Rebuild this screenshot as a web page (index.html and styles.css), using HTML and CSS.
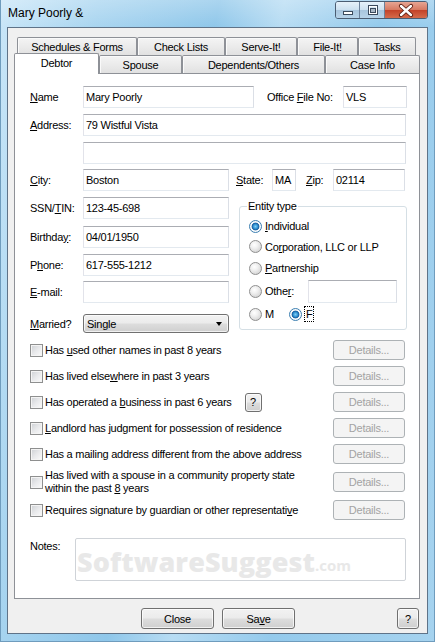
FILE: index.html
```html
<!DOCTYPE html>
<html>
<head>
<meta charset="utf-8">
<title>Mary Poorly &amp;</title>
<link rel="stylesheet" href="styles.css">
</head>
<body>
<div class="window">
  <div class="titlebar">
    <span class="title">Mary Poorly &amp;</span>
    <div class="caption-btns">
      <span class="cbtn cbtn-min"><svg width="24" height="17" viewBox="0 0 24 17"><rect x="7.5" y="9.5" width="9" height="3" fill="#fff" stroke="#3b4a5c"/></svg></span>
      <span class="cbtn cbtn-max"><svg width="25" height="17" viewBox="0 0 25 17"><rect x="8.5" y="3.5" width="9" height="9" fill="none" stroke="#3b4a5c"/><rect x="9.5" y="4.5" width="7" height="7" fill="none" stroke="#fff"/><rect x="10.5" y="6.5" width="5" height="4" fill="#aab8c6" stroke="#3b4a5c"/></svg></span>
      <span class="cbtn cbtn-close"><svg width="42" height="17" viewBox="0 0 42 17"><path d="M16 4 L26 13 M26 4 L16 13" stroke="#5b1c10" stroke-width="4.2" stroke-linecap="round"/><path d="M16 4 L26 13 M26 4 L16 13" stroke="#fff" stroke-width="2.4" stroke-linecap="round"/></svg></span>
    </div>
  </div>
  <div class="client">
    <div class="tabs">
      <div class="tabrow back">
        <span class="tab w-sched">Schedules &amp; Forms</span>
        <span class="tab w-check">Check Lists</span>
        <span class="tab w-serve">Serve-It!</span>
        <span class="tab w-file">File-It!</span>
        <span class="tab w-tasks">Tasks</span>
      </div>
      <div class="tabrow front">
        <span class="tab sel w-debtor">Debtor</span>
        <span class="tab w-spouse">Spouse</span>
        <span class="tab w-dep">Dependents/Others</span>
        <span class="tab w-case">Case Info</span>
      </div>
    </div>
    <div class="panel">
      <div class="row">
        <span class="lbl"><u>N</u>ame</span>
        <span class="inp w-name">Mary Poorly</span>
        <span class="lbl-office">Office <u>F</u>ile No:</span>
        <span class="inp w-office">VLS</span>
      </div>
      <div class="row mt6">
        <span class="lbl"><u>A</u>ddress:</span>
        <span class="inp w-addr">79 Wistful Vista</span>
      </div>
      <div class="row mt6">
        <span class="lbl"></span>
        <span class="inp w-addr"></span>
      </div>
      <div class="row mt5">
        <span class="lbl"><u>C</u>ity:</span>
        <span class="inp w-city">Boston</span>
        <span class="lbl-state"><u>S</u>tate:</span>
        <span class="inp w-state">MA</span>
        <span class="lbl-zip"><u>Z</u>ip:</span>
        <span class="inp w-zip">02114</span>
      </div>
      <div class="lower">
        <div class="leftcol">
          <div class="row">
            <span class="lbl">SSN/<u>T</u>IN:</span>
            <span class="inp w-city">123-45-698</span>
          </div>
          <div class="row mt7">
            <span class="lbl">Birthda<u>y</u>:</span>
            <span class="inp w-city">04/01/1950</span>
          </div>
          <div class="row mt6">
            <span class="lbl">P<u>h</u>one:</span>
            <span class="inp w-city">617-555-1212</span>
          </div>
          <div class="row mt5">
            <span class="lbl"><u>E</u>-mail:</span>
            <span class="inp w-city"></span>
          </div>
          <div class="row row-select">
            <span class="lbl"><u>M</u>arried?</span>
            <span class="select">Single<span class="arrow"></span></span>
          </div>
        </div>
        <fieldset class="entity">
          <legend>Entity type</legend>
          <div class="rrow h20"><span class="rd on"></span><span class="rtext"><u>I</u>ndividual</span></div>
          <div class="rrow h21"><span class="rd"></span><span class="rtext">Co<u>r</u>poration, LLC or LLP</span></div>
          <div class="rrow h22"><span class="rd"></span><span class="rtext"><u>P</u>artnership</span></div>
          <div class="rrow h24"><span class="rd"></span><span class="rtext">Othe<u>r</u>:</span><span class="inp w-other"></span></div>
          <div class="rrow h22"><span class="rd"></span><span class="rtext w-m">M</span><span class="rd on"></span><span class="rtext focus">F</span></div>
        </fieldset>
      </div>
      <div class="checks">
        <div class="crow"><span class="cb"></span><span class="ctext">Has <u>u</u>sed other names in past 8 years</span><span class="btn details">Details...</span></div>
        <div class="crow"><span class="cb"></span><span class="ctext">Has lived else<u>w</u>here in past 3 years</span><span class="btn details">Details...</span></div>
        <div class="crow"><span class="cb"></span><span class="ctext">Has operated a <u>b</u>usiness in past 6 years</span><span class="btn qbtn">?</span><span class="btn details">Details...</span></div>
        <div class="crow"><span class="cb"></span><span class="ctext"><u>L</u>andlord has judgment for possession of residence</span><span class="btn details">Details...</span></div>
        <div class="crow"><span class="cb"></span><span class="ctext">Has a mailin<u>g</u> address different from the above address</span><span class="btn details">Details...</span></div>
        <div class="crow tall"><span class="cb"></span><span class="ctext two">Has lived with a spouse in a community property state<br>within the past <u>8</u> years</span><span class="btn details">Details...</span></div>
        <div class="crow"><span class="cb"></span><span class="ctext">Requires signature by guardian or other representati<u>v</u>e</span><span class="btn details">Details...</span></div>
      </div>
      <div class="notes">
        <span class="lbl-notes">Notes:</span>
        <div class="notes-box"><span class="wm">SoftwareSuggest</span><span class="wm-com">.com</span></div>
      </div>
    </div>
    <div class="footer">
      <span class="btn push w-close">Close</span>
      <span class="btn push w-save">Sa<u>v</u>e</span>
      <span class="btn push w-help">?</span>
    </div>
  </div>
</div>
</body>
</html>
```
FILE: styles.css
```css
* { box-sizing: border-box; }
html, body { margin: 0; padding: 0; }
body {
  width: 435px;
  height: 642px;
  overflow: hidden;
  font-family: "Liberation Sans", Arial, sans-serif;
  font-size: 11px;
  letter-spacing: -0.25px;
  color: #000;
}
u { text-decoration: underline; text-underline-offset: 1px; }

.window {
  width: 435px;
  height: 642px;
  padding: 0 6px 7px 6px;
  display: flex;
  flex-direction: column;
  background:
    linear-gradient(180deg, rgba(255,255,255,0.25) 0px, rgba(255,255,255,0) 27px),
    linear-gradient(100deg, #c9e6f8 0%, #a9d5f0 18%, #8fc7ea 40%, #b7dcf3 52%, #94caec 70%, #a6d3ef 100%);
  border-left: 1px solid #6f9cbd;
  border-right: 1px solid #6f9cbd;
  border-bottom: 1px solid #6f9cbd;
}

/* Title bar */
.titlebar {
  height: 27px;
  display: flex;
  align-items: flex-start;
}
.title {
  font-size: 12px;
  letter-spacing: 0;
  line-height: 14px;
  margin: 6px 0 0 1px;
}
.caption-btns {
  margin: 1px 0 0 auto;
  display: flex;
  height: 18px;
  border: 1px solid #4b5d72;
  border-radius: 3px;
  overflow: hidden;
}
.cbtn { display: block; height: 17px; }
.cbtn svg { display: block; }
.cbtn-min, .cbtn-max {
  background: linear-gradient(180deg, #e6f1f9 0%, #cde1f0 45%, #a9c6de 50%, #b9d5ea 100%);
  border-right: 1px solid #6c819a;
}
.cbtn-min { width: 24px; }
.cbtn-max { width: 25px; }
.cbtn-close {
  width: 42px;
  background: linear-gradient(180deg, #e7a593 0%, #d77a62 45%, #c4442a 50%, #d7704f 100%);
}

/* Client area */
.client {
  flex: 1;
  border: 1px solid #5f7388;
  background: #f0f0f0;
  display: flex;
  flex-direction: column;
}
.tabs {
  margin-top: 9px;
  height: 36px;
}
.tabrow {
  display: flex;
  height: 18px;
  align-items: flex-end;
}
.tabrow.back { margin-left: 9px; }
.tabrow.front { margin-left: 6px; position: relative; z-index: 1; }
.tab {
  height: 18px;
  border: 1px solid #8e9197;
  border-bottom: none;
  border-radius: 2px 2px 0 0;
  background: linear-gradient(180deg, #f4f4f4 0%, #ebebeb 50%, #e1e1e1 100%);
  box-shadow: inset 1px 1px 0 #fafafa;
  display: flex;
  align-items: center;
  justify-content: center;
  white-space: nowrap;
  padding-top: 1px;
}
.tab.sel {
  height: 21px;
  margin-bottom: -1px;
  background: #fff;
  box-shadow: none;
  padding-top: 0;
  padding-bottom: 3px;
}
.w-sched { width: 120px; }
.w-check { width: 88px; }
.w-serve { width: 72px; }
.w-file { width: 61px; }
.w-tasks { width: 58px; }
.w-debtor { width: 85px; }
.w-spouse { width: 83px; }
.w-dep { width: 143px; }
.w-case { width: 95px; }

.panel {
  margin-left: 6px;
  width: 406px;
  height: 526px;
  border: 1px solid #8e9197;
  background: #fff;
  padding: 12px 0 0 15px;
}
.row {
  display: flex;
  align-items: center;
  height: 22px;
}
.mt5 { margin-top: 5px; }
.mt6 { margin-top: 6px; }
.mt7 { margin-top: 7px; }
.lbl { width: 53px; flex: none; }
.inp {
  height: 22px;
  flex: none;
  border: 1px solid;
  border-color: #abadb3 #dbdfe6 #e3e9ef #e2e3ea;
  background: #fff;
  padding: 0 2px;
  display: flex;
  align-items: center;
  white-space: nowrap;
}
.w-name { width: 171px; }
.lbl-office { margin-left: 13px; width: 76px; flex: none; }
.w-office { width: 64px; }
.w-addr { width: 323px; }
.w-city { width: 146px; }
.lbl-state { margin-left: 7px; width: 36px; flex: none; }
.w-state { width: 24px; }
.lbl-zip { margin-left: 10px; width: 27px; flex: none; }
.w-zip { width: 72px; }

.lower {
  display: flex;
  align-items: flex-start;
  margin-top: 6px;
}
.leftcol { width: 199px; flex: none; }
.row-select { margin-top: 11px; height: 19px; }
.select {
  width: 146px;
  height: 19px;
  border: 1px solid #707070;
  border-radius: 3px;
  background: linear-gradient(180deg, #f2f2f2 0%, #ebebeb 48%, #dddddd 52%, #cfcfcf 100%);
  box-shadow: inset 0 0 0 1px rgba(255,255,255,0.7);
  display: flex;
  align-items: center;
  padding-left: 3px;
  position: relative;
}
.arrow {
  margin-left: auto;
  margin-right: 6px;
  width: 0;
  height: 0;
  border-left: 3.5px solid transparent;
  border-right: 3.5px solid transparent;
  border-top: 4px solid #000;
}

.entity {
  margin: 3px 0 0 10px;
  width: 168px;
  border: 1px solid #d5dfe5;
  border-radius: 3px;
  padding: 0 0 4px 7px;
  min-width: 0;
}
.entity legend {
  padding: 0 1px;
  line-height: 13px;
  color: #000;
}
.rrow {
  display: flex;
  align-items: center;
}
.rrow.h20 { height: 20px; margin-top: 3px; }
.h21 { height: 21px; }
.h22 { height: 22px; }
.h24 { height: 24px; }
.rd {
  width: 13px;
  height: 13px;
  flex: none;
  margin-left: 2px;
  border-radius: 50%;
  border: 1px solid #8f8f8f;
  background: radial-gradient(circle at 40% 35%, #ffffff 0%, #f0f0f0 35%, #c8c8c8 100%);
  position: relative;
}
.rd.on {
  border-color: #3c7fb1;
  background: radial-gradient(circle at 50% 50%, #7fd0f7 0%, #2f8fd0 30%, #155a9c 45%, #ffffff 55%, #e6eef5 100%);
}
.rtext { margin-left: 3px; white-space: nowrap; }
.w-m { width: 22px; }
.focus {
  outline: 1px dotted #000;
  outline-offset: 0;
  padding: 1px 1px;
  line-height: 12px;
}
.w-other { width: 89px; height: 23px; margin-left: auto; margin-right: 9px; }

/* Checkbox rows */
.checks {
  margin-top: 4px;
  width: 375px;
}
.crow {
  display: flex;
  align-items: center;
  height: 26px;
}
.crow.tall { height: 30px; }
.cb {
  width: 13px;
  height: 13px;
  flex: none;
  border: 1px solid #8e8f8f;
  background: linear-gradient(135deg, #cdd0d4 0%, #e8e9eb 50%, #fbfbfb 100%);
  box-shadow: inset 0 0 0 1px #f4f4f4;
}
.ctext { margin-left: 2px; white-space: nowrap; }
.ctext.two { line-height: 13px; }
.btn {
  display: flex;
  align-items: center;
  justify-content: center;
  border-radius: 3px;
  flex: none;
}
.details {
  margin-left: auto;
  width: 72px;
  height: 20px;
  border: 1px solid #adb2b5;
  background: #f4f4f4;
  color: #a3a3a3;
}
.qbtn, .push {
  border: 1px solid #707070;
  background: linear-gradient(180deg, #f2f2f2 0%, #ebebeb 48%, #dddddd 52%, #cfcfcf 100%);
  box-shadow: inset 0 0 0 1px rgba(255,255,255,0.7);
}
.qbtn {
  margin-left: 13px;
  width: 17px;
  height: 19px;
}

/* Notes */
.notes {
  display: flex;
  margin-top: 15px;
}
.lbl-notes { width: 45px; flex: none; padding-top: 2px; }
.notes-box {
  width: 331px;
  height: 43px;
  border: 1px solid #cfd3d8;
  border-radius: 2px;
  display: flex;
  align-items: center;
  padding: 4px 0 0 1px;
  overflow: hidden;
  letter-spacing: 0;
}
.wm {
  font-family: "Open Sans", "Liberation Sans", sans-serif;
  font-weight: 800;
  font-size: 27px;
  color: #e8e8e8;
  letter-spacing: 0.1px;
  line-height: 1;
}
.wm-com {
  font-family: "Open Sans", "Liberation Sans", sans-serif;
  font-weight: 700;
  font-size: 15px;
  color: #e8e8e8;
  margin-top: 7px;
}

/* Footer buttons */
.footer {
  display: flex;
  height: 21px;
  margin-top: 9px;
}
.w-close { width: 73px; margin-left: 133px; }
.w-save { width: 73px; margin-left: 8px; }
.w-help { width: 22px; margin-left: auto; margin-right: 8px; }
```
